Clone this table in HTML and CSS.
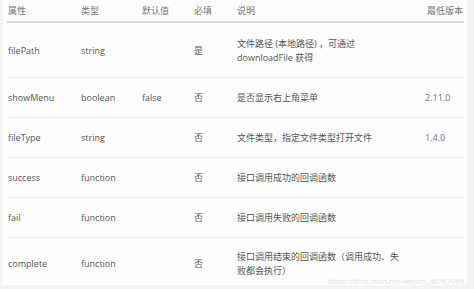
FILE: index.html
```html
<!DOCTYPE html>
<html lang="en">
    <head>
        <meta charset="UTF-8">
        <title>saveFile params</title>
        <link rel="stylesheet" href="styles.css">
    </head>
    <body>
        <div class="card">
            <table class="params">
                <colgroup>
                    <col class="c-name">
                    <col class="c-type">
                    <col class="c-def">
                    <col class="c-req">
                    <col class="c-desc">
                    <col class="c-ver">
                </colgroup>
                <thead>
                    <tr>
                        <th>属性</th>
                        <th>类型</th>
                        <th>默认值</th>
                        <th>必填</th>
                        <th>说明</th>
                        <th class="ver-head">最低版本</th>
                    </tr>
                </thead>
                <tbody>
                    <tr>
                        <td>filePath</td>
                        <td>string</td>
                        <td></td>
                        <td>是</td>
                        <td>文件路径 (本地路径) ，可通过 downloadFile 获得</td>
                        <td class="ver"></td>
                    </tr>
                    <tr>
                        <td>showMenu</td>
                        <td>boolean</td>
                        <td>false</td>
                        <td>否</td>
                        <td>是否显示右上角菜单</td>
                        <td class="ver">2.11.0</td>
                    </tr>
                    <tr>
                        <td>fileType</td>
                        <td>string</td>
                        <td></td>
                        <td>否</td>
                        <td>文件类型，指定文件类型打开文件</td>
                        <td class="ver">1.4.0</td>
                    </tr>
                    <tr>
                        <td>success</td>
                        <td>function</td>
                        <td></td>
                        <td>否</td>
                        <td>接口调用成功的回调函数</td>
                        <td class="ver"></td>
                    </tr>
                    <tr>
                        <td>fail</td>
                        <td>function</td>
                        <td></td>
                        <td>否</td>
                        <td>接口调用失败的回调函数</td>
                        <td class="ver"></td>
                    </tr>
                    <tr class="last">
                        <td>complete</td>
                        <td>function</td>
                        <td></td>
                        <td>否</td>
                        <td><span class="desc">接口调用结束的回调函数（调用成功、失败都会执行）</span></td>
                        <td class="ver"></td>
                    </tr>
                </tbody>
            </table>
            <span class="mark">https://blog.csdn.net/weixin_46767069</span>
        </div>
    </body>
</html>
```

FILE: styles.css
```css
*{
    box-sizing: border-box;
}
body{
    margin: 0;
    background-color: #f4f4f4;
    font-family: "Open Sans", "Noto Sans CJK SC", sans-serif;
    font-size: 9px;
    color: #555;
}
.card{
    position: relative;
    width: 464px;
    height: 285px;
    margin-left: 3px;
    padding-left: 4px;
    background-color: #fdfdfd;
    overflow: hidden;
}
.params{
    width: 457px;
    border-collapse: collapse;
    table-layout: fixed;
}
.c-name{ width: 73px; }
.c-type{ width: 61px; }
.c-def{ width: 52px; }
.c-req{ width: 43px; }
.c-desc{ width: 175px; }
.params th{
    height: 22px;
    padding: 0 1px;
    text-align: left;
    font-weight: normal;
    color: #777;
    line-height: 14px;
    border-bottom: 2px solid #dcdcdc;
}
.params td{
    padding: 13px 10px 12px 1px;
    line-height: 14px;
    vertical-align: middle;
    border-bottom: 1px solid #efefef;
}
.params tbody tr:first-child td{
    padding-top: 14px;
}
.params tr.last td{
    padding-top: 12px;
    border-bottom: none;
}
.desc{
    display: block;
    width: 162px;
}
.params th.ver-head{
    text-align: right;
    padding-right: 1px;
}
.params td.ver{
    padding-left: 14px;
    padding-right: 20px;
    text-align: center;
    color: #5f6fa6;
}
.mark{
    position: absolute;
    right: 3px;
    bottom: 0;
    font-size: 8px;
    line-height: 8px;
    color: #e4e4e4;
    letter-spacing: -0.2px;
}
```
